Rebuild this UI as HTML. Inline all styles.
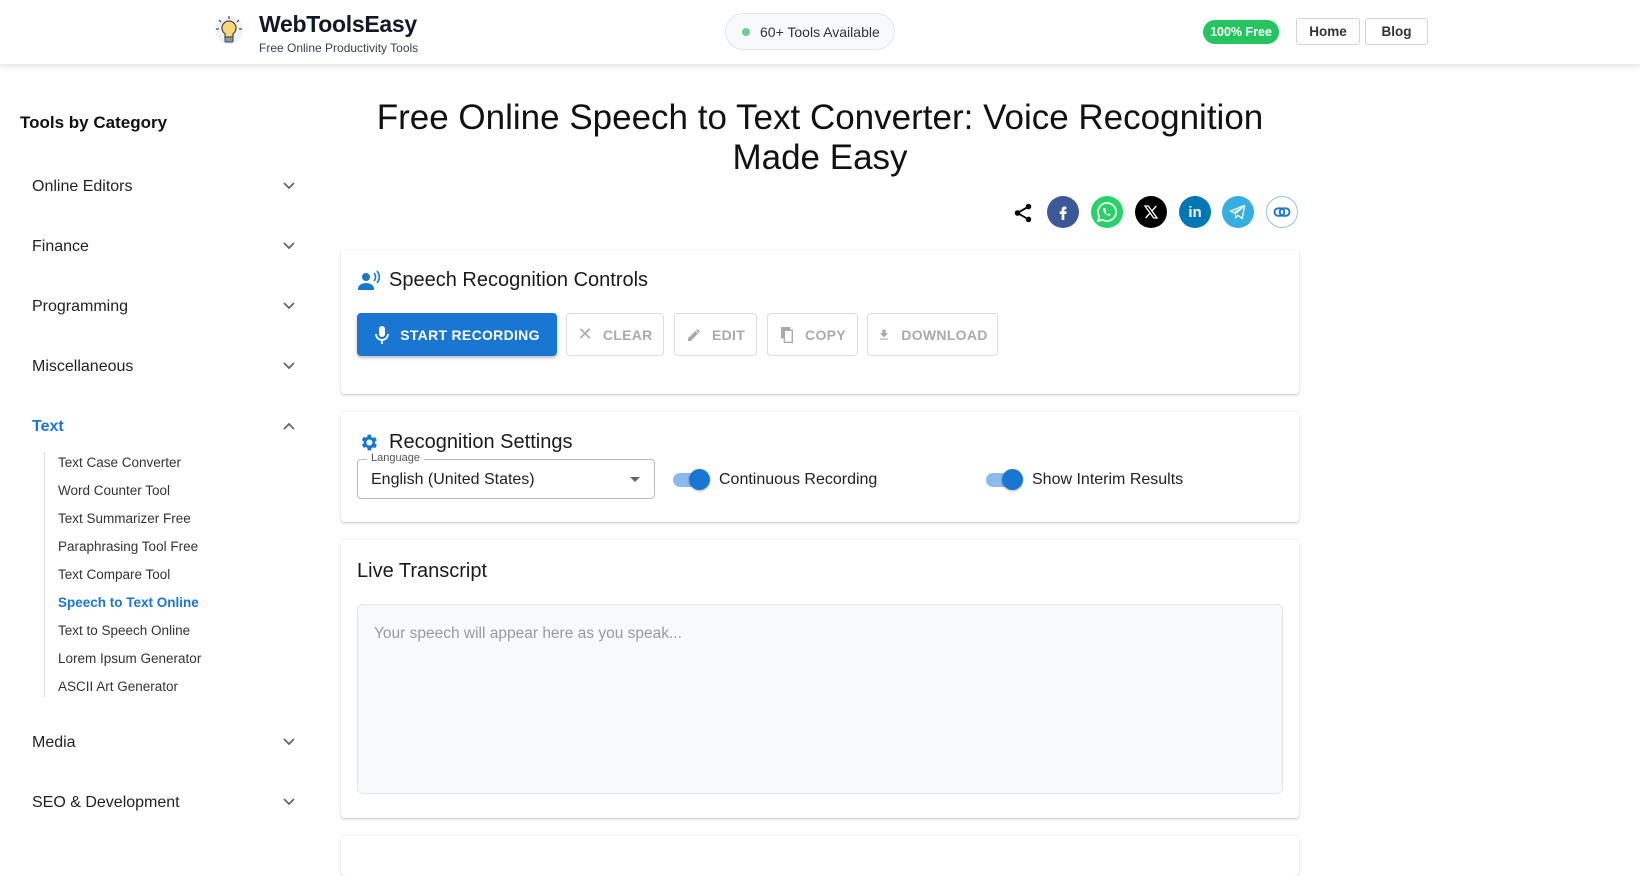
<!DOCTYPE html>
<html><head><meta charset="utf-8">
<style>
*{box-sizing:border-box;margin:0;padding:0}
body{width:1640px;height:856px;overflow:hidden;background:#fff;font-family:"Liberation Sans",Arial,sans-serif;color:#1a1a1a;position:relative}
.abs{position:absolute}
header{position:absolute;left:0;top:0;width:1640px;height:64px;background:#fff;box-shadow:0 2px 6px rgba(0,0,0,.12);z-index:2}
.card{position:absolute;left:341px;width:958px;background:#fff;border-radius:4px;box-shadow:0 1px 3px rgba(0,0,0,.18),0 1px 1px rgba(0,0,0,.06)}
.cat{position:absolute;left:32px;font-size:16px;color:#222}
.chev{position:absolute;left:282px;width:14px;height:14px}
.sub{position:absolute;left:58px;font-size:13.5px;color:#333}
.btn{position:absolute;top:313px;height:43px;border:1px solid #ddd;border-radius:4px;color:#aaa;font-size:14px;font-weight:bold;display:flex;align-items:center;justify-content:center;gap:10px;letter-spacing:.3px}
.soc{position:absolute;top:196px;width:32px;height:32px;border-radius:50%;display:flex;align-items:center;justify-content:center}
h2{font-weight:normal;font-size:20px}
</style></head><body>
<header>
  <svg class="abs" style="left:213px;top:14px" width="32" height="34" viewBox="0 0 32 34">
    <circle cx="16" cy="16" r="14" fill="#eef3fb"/>
    <g stroke="#555" stroke-width="1.3"><line x1="16" y1="2" x2="16" y2="5"/><line x1="6" y1="6" x2="8" y2="8"/><line x1="26" y1="6" x2="24" y2="8"/><line x1="3" y1="15" x2="6" y2="15"/><line x1="29" y1="15" x2="26" y2="15"/></g>
    <path d="M16 7a7 7 0 0 0-4 12.8V23h8v-3.2A7 7 0 0 0 16 7z" fill="#f7d777" stroke="#444" stroke-width="1.2"/>
    <rect x="12" y="23" width="8" height="5" rx="1" fill="#8a9bb0" stroke="#444" stroke-width="1"/>
  </svg>
  <div class="abs" style="left:259px;top:11px;font-size:23px;font-weight:bold;color:#111827;letter-spacing:-.3px">WebToolsEasy</div>
  <div class="abs" style="left:259px;top:41px;font-size:12px;color:#374151">Free Online Productivity Tools</div>
  <div class="abs" style="left:725px;top:13px;width:170px;height:37px;border:1px solid #e2e5ea;border-radius:19px;background:#f8f9fb;font-size:14px;color:#333;display:flex;align-items:center;padding-left:16px"><span style="width:8px;height:8px;border-radius:50%;background:#6ad08b;margin-right:10px"></span>60+ Tools Available</div>
  <div class="abs" style="left:1203px;top:20px;width:76px;height:24px;border-radius:12px;background:#22c55e;color:#fff;font-size:12.5px;font-weight:bold;display:flex;align-items:center;justify-content:center">100% Free</div>
  <div class="abs" style="left:1296px;top:18px;width:64px;height:27px;border:1px solid #d0d4da;border-radius:3px;font-size:13.5px;font-weight:bold;color:#333;display:flex;align-items:center;justify-content:center">Home</div>
  <div class="abs" style="left:1365px;top:18px;width:63px;height:27px;border:1px solid #d0d4da;border-radius:3px;font-size:13.5px;font-weight:bold;color:#333;display:flex;align-items:center;justify-content:center">Blog</div>
</header>

<div class="abs" style="left:20px;top:113px;font-size:17px;font-weight:bold;color:#111">Tools by Category</div>
<svg width="0" height="0" style="position:absolute"><defs><path id="dn" d="M2 4l5 5 5-5" fill="none" stroke="#666" stroke-width="1.8"/><path id="up" d="M2 10l5-5 5 5" fill="none" stroke="#666" stroke-width="1.8"/></defs></svg>
<div class="cat" style="top:178px">Online Editors</div><svg class="chev" style="top:179px"><use href="#dn"/></svg>
<div class="cat" style="top:238px">Finance</div><svg class="chev" style="top:239px"><use href="#dn"/></svg>
<div class="cat" style="top:298px">Programming</div><svg class="chev" style="top:299px"><use href="#dn"/></svg>
<div class="cat" style="top:358px">Miscellaneous</div><svg class="chev" style="top:359px"><use href="#dn"/></svg>
<div class="cat" style="top:418px;color:#1976d2;font-weight:bold">Text</div><svg class="chev" style="top:419px"><use href="#up"/></svg>
<div class="abs" style="left:44px;top:452px;width:1px;height:245px;background:#ddd"></div>
<div class="sub" style="top:455px">Text Case Converter</div>
<div class="sub" style="top:483px">Word Counter Tool</div>
<div class="sub" style="top:511px">Text Summarizer Free</div>
<div class="sub" style="top:539px">Paraphrasing Tool Free</div>
<div class="sub" style="top:567px">Text Compare Tool</div>
<div class="sub" style="top:595px;color:#1976d2;font-weight:bold">Speech to Text Online</div>
<div class="sub" style="top:623px">Text to Speech Online</div>
<div class="sub" style="top:651px">Lorem Ipsum Generator</div>
<div class="sub" style="top:679px">ASCII Art Generator</div>
<div class="cat" style="top:734px">Media</div><svg class="chev" style="top:735px"><use href="#dn"/></svg>
<div class="cat" style="top:794px">SEO &amp; Development</div><svg class="chev" style="top:795px"><use href="#dn"/></svg>

<div class="abs" style="left:341px;top:98px;width:958px;text-align:center;font-size:35px;line-height:40px;color:#111">Free Online Speech to Text Converter: Voice Recognition<br>Made Easy</div>

<svg class="abs" style="left:1012px;top:202px" width="22" height="22" viewBox="0 0 24 24"><circle cx="18" cy="5" r="3"/><circle cx="6" cy="12" r="3"/><circle cx="18" cy="19" r="3"/><path d="M18 5L6 12l12 7" fill="none" stroke="#000" stroke-width="2"/></svg>
<div class="soc" style="left:1047px;background:#3b5998"><svg width="16" height="16" viewBox="0 0 24 24"><path d="M14 8h3V4h-3c-2.8 0-4 1.8-4 4.2V11H7v4h3v9h4v-9h3l.5-4H14V8.8c0-.5.3-.8 1-.8z" fill="#fff"/></svg></div>
<div class="soc" style="left:1091px;background:#25d366"><svg width="24" height="24" viewBox="0 0 24 24"><path d="M12 3a9 9 0 0 0-7.8 13.5L3 21l4.6-1.2A9 9 0 1 0 12 3z" fill="none" stroke="#fff" stroke-width="1.8"/><path d="M9 8c-.5 0-1 .8-1 1.6 0 2.4 3.3 5.8 6 6 .9 0 1.6-.6 1.6-1.2l-1.8-.9-.8.9c-1.2-.5-2.2-1.5-2.7-2.7l.8-.8L10.2 8z" fill="#fff"/></svg></div>
<div class="soc" style="left:1135px;background:#000"><svg width="16" height="16" viewBox="0 0 24 24"><path d="M3 3h5l13 18h-5zM20 3l-7 8M4 21l7-8" fill="none" stroke="#fff" stroke-width="2"/></svg></div>
<div class="soc" style="left:1179px;background:#0077b5;color:#fff;font-weight:bold;font-size:15px">in</div>
<div class="soc" style="left:1222px;background:#37aee2"><svg width="20" height="20" viewBox="0 0 24 24"><path d="M3 11l17-7-3 16-5-4-3 3v-5l8-7-10 6z" fill="none" stroke="#fff" stroke-width="1.6" stroke-linejoin="round"/></svg></div>
<div class="soc" style="left:1266px;border:1px solid #8cc4f0"><svg width="18" height="12" viewBox="0 0 24 14"><rect x="2" y="2" width="13" height="10" rx="5" fill="none" stroke="#1976d2" stroke-width="2.5"/><rect x="9" y="2" width="13" height="10" rx="5" fill="none" stroke="#1976d2" stroke-width="2.5"/></svg></div>

<div class="card" style="top:250px;height:144px"></div>
<svg class="abs" style="left:357px;top:270px" width="24" height="22" viewBox="0 0 24 22"><circle cx="9" cy="7" r="4" fill="#1976d2"/><path d="M1 19c0-4 4-6 8-6s8 2 8 6v1H1z" fill="#1976d2"/><path d="M17 3a6 6 0 0 1 0 8M20 1a9 9 0 0 1 0 12" fill="none" stroke="#1976d2" stroke-width="1.6"/></svg>
<h2 class="abs" style="left:389px;top:269px">Speech Recognition Controls</h2>
<div class="btn" style="left:357px;width:200px;background:#1976d2;border-color:#1976d2;color:#fff;box-shadow:0 2px 3px rgba(0,0,0,.25)"><svg width="16" height="20" viewBox="0 0 16 20"><rect x="5" y="1" width="6" height="11" rx="3" fill="#fff"/><path d="M2 9a6 6 0 0 0 12 0M8 15v4" fill="none" stroke="#fff" stroke-width="1.8"/></svg>START RECORDING</div>
<div class="btn" style="left:566px;width:98px"><span style="font-weight:normal;font-size:18px">✕</span>CLEAR</div>
<div class="btn" style="left:674px;width:83px"><svg width="16" height="16" viewBox="0 0 24 24"><path d="M3 17v4h4L18 10l-4-4zM15 5l4 4 2-2-4-4z" fill="#aaa"/></svg>EDIT</div>
<div class="btn" style="left:767px;width:91px"><svg width="16" height="18" viewBox="0 0 24 24"><path d="M16 1H4v15h2V3h10zM8 5h12v18H8z" fill="none" stroke="#aaa" stroke-width="2"/></svg>COPY</div>
<div class="btn" style="left:867px;width:131px"><svg width="14" height="16" viewBox="0 0 24 24"><path d="M19 9h-4V3H9v6H5l7 7zM5 18v2h14v-2z" fill="#aaa"/></svg>DOWNLOAD</div>

<div class="card" style="top:412px;height:110px"></div>
<svg class="abs" style="left:358px;top:432px" width="21" height="21" viewBox="0 0 24 24"><path d="M19.4 13a7.5 7.5 0 0 0 0-2l2.1-1.6-2-3.5-2.5 1a7 7 0 0 0-1.7-1L15 3h-4l-.4 2.6a7 7 0 0 0-1.7 1l-2.5-1-2 3.5L6.6 11a7.5 7.5 0 0 0 0 2l-2.1 1.6 2 3.5 2.5-1a7 7 0 0 0 1.7 1L11 21h4l.4-2.6a7 7 0 0 0 1.7-1l2.5 1 2-3.5zM13 15.5a3.5 3.5 0 1 1 0-7 3.5 3.5 0 0 1 0 7z" fill="#1976d2"/></svg>
<h2 class="abs" style="left:389px;top:431px">Recognition Settings</h2>
<div class="abs" style="left:357px;top:459px;width:298px;height:40px;border:1px solid #bbb;border-radius:4px"></div>
<div class="abs" style="left:367px;top:452px;background:#fff;padding:0 4px;font-size:11px;color:#555">Language</div>
<div class="abs" style="left:371px;top:471px;font-size:16px;color:#222">English (United States)</div>
<div class="abs" style="left:630px;top:477px;width:0;height:0;border-left:5px solid transparent;border-right:5px solid transparent;border-top:5px solid #666"></div>
<div class="abs" style="left:673px;top:473px;width:34px;height:14px;border-radius:7px;background:#8bbbea"></div>
<div class="abs" style="left:689px;top:469px;width:21px;height:21px;border-radius:50%;background:#1976d2;box-shadow:0 1px 2px rgba(0,0,0,.3)"></div>
<div class="abs" style="left:719px;top:471px;font-size:16px;color:#222">Continuous Recording</div>
<div class="abs" style="left:986px;top:473px;width:34px;height:14px;border-radius:7px;background:#8bbbea"></div>
<div class="abs" style="left:1002px;top:469px;width:21px;height:21px;border-radius:50%;background:#1976d2;box-shadow:0 1px 2px rgba(0,0,0,.3)"></div>
<div class="abs" style="left:1032px;top:471px;font-size:16px;color:#222">Show Interim Results</div>

<div class="card" style="top:540px;height:278px"></div>
<h2 class="abs" style="left:357px;top:560px">Live Transcript</h2>
<div class="abs" style="left:357px;top:604px;width:926px;height:190px;border:1px solid #e3e5e8;border-radius:6px;background:#f8f9fa"></div>
<div class="abs" style="left:374px;top:625px;font-size:15.5px;color:#999">Your speech will appear here as you speak...</div>

<div class="card" style="top:836px;height:40px"></div>
</body></html>
